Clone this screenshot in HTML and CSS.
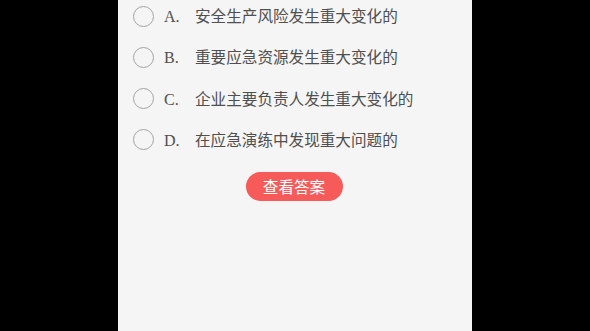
FILE: index.html
```html
<!DOCTYPE html>
<html lang="zh">
<head>
<meta charset="utf-8">
<link rel="stylesheet" href="styles.css">
</head>
<body>
<div class="panel">
  <div class="options">
    <div class="option"><span class="radio"></span><span class="label"><span class="letter">A.</span><span class="text">安全生产风险发生重大变化的</span></span></div>
    <div class="option"><span class="radio"></span><span class="label"><span class="letter">B.</span><span class="text">重要应急资源发生重大变化的</span></span></div>
    <div class="option"><span class="radio"></span><span class="label"><span class="letter">C.</span><span class="text">企业主要负责人发生重大变化的</span></span></div>
    <div class="option"><span class="radio"></span><span class="label"><span class="letter">D.</span><span class="text">在应急演练中发现重大问题的</span></span></div>
  </div>
  <div class="actions"><button class="answer-btn">查看答案</button></div>
</div>
</body>
</html>
```
FILE: styles.css
```css
html, body {
  margin: 0;
  padding: 0;
  background: #000;
  height: 100%;
  overflow: hidden;
}
.panel {
  width: 354px;
  height: 331px;
  margin-left: 118px;
  background: #f5f5f5;
  box-sizing: border-box;
  padding-left: 15px;
}
.options {
  display: flex;
  flex-direction: column;
  gap: 9.3px;
}
.option {
  height: 32px;
  display: flex;
  align-items: center;
  color: #4f4f4f;
  font-size: 15.6px;
}
.radio {
  width: 19px;
  height: 19px;
  border: 1px solid #a3a3a3;
  border-radius: 50%;
  flex: none;
  margin-right: 10px;
}
.label {
  line-height: 20px;
  white-space: nowrap;
}
.letter {
  font-family: "Liberation Serif", "DejaVu Serif", serif;
  display: inline-block;
  width: 31px;
  font-size: 16px;
}
.text {
  font-family: "Noto Sans CJK SC", "Noto Sans", sans-serif;
}
.actions {
  display: flex;
  justify-content: center;
  padding-right: 17px;
  margin-top: 16px;
}
.answer-btn {
  border: none;
  background: #f65b5a;
  color: #fff;
  font-family: "Noto Sans CJK SC", "Noto Sans", sans-serif;
  font-size: 15.6px;
  width: 97px;
  height: 29px;
  border-radius: 14.5px;
  padding: 0;
  line-height: 29px;
}
```
